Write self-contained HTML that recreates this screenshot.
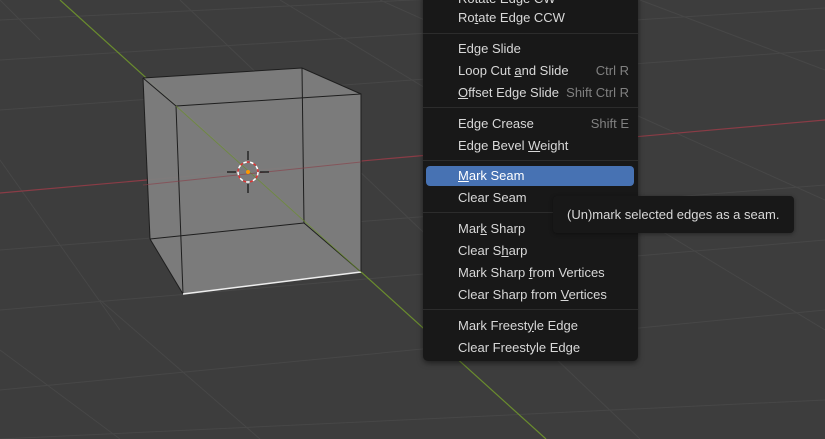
<!DOCTYPE html>
<html><head><meta charset="utf-8"><style>
body{margin:0;width:825px;height:439px;overflow:hidden;background:#3d3d3d;font-family:"Liberation Sans","DejaVu Sans",sans-serif;position:relative}
svg{position:absolute;left:0;top:0}
.menu{position:absolute;left:423px;top:-5px;width:215px;height:366px;background:#181818;border-radius:0 0 5px 5px;box-shadow:0 2px 6px rgba(0,0,0,.5)}
.it{position:absolute;left:35px;color:#d8d8d8;font-size:13px;line-height:20px;height:20px;white-space:nowrap}
.sc{position:absolute;right:9px;color:#808080;font-size:13px;line-height:20px}
.sep{position:absolute;left:0;right:0;height:1px;background:#2c2c2c}
.hl{position:absolute;left:3px;right:4px;height:20px;background:#4772b3;border-radius:4px}
u{text-decoration:underline}
.tip{position:absolute;left:553px;top:196px;width:241px;height:37px;background:#181818;border-radius:4px;color:#d8d8d8;font-size:13px;line-height:37px;text-indent:14px;box-shadow:0 1px 4px rgba(0,0,0,.4)}
</style></head><body>
<svg width="825" height="439">
<g stroke="#474747" stroke-width="1" fill="none">
<line x1="0" y1="60" x2="825" y2="8"/>
<line x1="0" y1="110" x2="825" y2="50"/>
<line x1="0" y1="250" x2="825" y2="185"/>
<line x1="0" y1="310" x2="825" y2="240"/>
<line x1="0" y1="390" x2="825" y2="310"/>
<line x1="0" y1="439" x2="825" y2="400"/>
<line x1="0" y1="20" x2="825" y2="-20"/>
<line x1="0" y1="160" x2="120" y2="330"/>
<line x1="0" y1="0" x2="40" y2="40"/>
<line x1="180" y1="0" x2="640" y2="439"/>
<line x1="280" y1="0" x2="825" y2="330"/>
<line x1="380" y1="0" x2="825" y2="200"/>
<line x1="0" y1="350" x2="120" y2="439"/>
<line x1="640" y1="0" x2="825" y2="70"/>
<line x1="100" y1="300" x2="260" y2="439"/>
</g>
<line x1="0" y1="193" x2="825" y2="120" stroke="#8a3c46" stroke-width="1.2"/>
<line x1="60" y1="0" x2="546" y2="439" stroke="#6a8c2e" stroke-width="1.2"/>
<polygon points="143,78 302,68 361,94 361,272 183,294 150,239" fill="#7e7e7e" fill-opacity="0.95"/>
<g stroke="#1e1e1e" stroke-width="1" fill="none">
<polyline points="143,78 302,68 361,94 361,272"/>
<line x1="143" y1="78" x2="176" y2="106"/>
<line x1="176" y1="106" x2="361" y2="94"/>
<line x1="176" y1="106" x2="183" y2="294"/>
<line x1="143" y1="78" x2="150" y2="239"/>
<line x1="150" y1="239" x2="304" y2="223"/>
<line x1="302" y1="68" x2="304" y2="223"/>
<line x1="304" y1="223" x2="361" y2="272"/>
<line x1="150" y1="239" x2="183" y2="294"/>
</g>
<line x1="183" y1="294" x2="361" y2="272" stroke="#eee" stroke-width="1.5"/>
<line x1="176" y1="106" x2="361" y2="272" stroke="#6a8c2e" stroke-width="1" opacity=".7"/>
<line x1="143" y1="185" x2="361" y2="162" stroke="#8a3c46" stroke-width="1" opacity=".6"/>
<circle cx="248" cy="172" r="10" fill="none" stroke="#fff" stroke-width="1.5" stroke-dasharray="4 3"/>
<circle cx="248" cy="172" r="10" fill="none" stroke="#d33" stroke-width="1.5" stroke-dasharray="3 4" stroke-dashoffset="3.5"/>
<g stroke="#111" stroke-width="1.2"><line x1="248" y1="151" x2="248" y2="160"/><line x1="248" y1="184" x2="248" y2="193"/><line x1="227" y1="172" x2="236" y2="172"/><line x1="260" y1="172" x2="269" y2="172"/></g>
<circle cx="248" cy="172" r="2" fill="#f90"/>
</svg>
<div class="menu">
<div class="it" style="top:-6px">Rotate Edge CW</div>
<div class="it" style="top:13px">Ro<u>t</u>ate Edge CCW</div>
<div class="sep" style="top:38px"></div>
<div class="it" style="top:44px">Edge Slide</div>
<div class="it" style="top:66px">Loop Cut <u>a</u>nd Slide</div><div class="sc" style="top:66px">Ctrl R</div>
<div class="it" style="top:88px"><u>O</u>ffset Edge Slide</div><div class="sc" style="top:88px">Shift Ctrl R</div>
<div class="sep" style="top:112px"></div>
<div class="it" style="top:119px">Edge Crease</div><div class="sc" style="top:119px">Shift E</div>
<div class="it" style="top:141px">Edge Bevel <u>W</u>eight</div>
<div class="sep" style="top:165px"></div>
<div class="hl" style="top:171px"></div>
<div class="it" style="top:171px;color:#fff"><u>M</u>ark Seam</div>
<div class="it" style="top:193px">Clear Seam</div>
<div class="sep" style="top:217px"></div>
<div class="it" style="top:224px">Mar<u>k</u> Sharp</div>
<div class="it" style="top:246px">Clear S<u>h</u>arp</div>
<div class="it" style="top:268px">Mark Sharp <u>f</u>rom Vertices</div>
<div class="it" style="top:290px">Clear Sharp from <u>V</u>ertices</div>
<div class="sep" style="top:314px"></div>
<div class="it" style="top:321px">Mark Freest<u>y</u>le Edge</div>
<div class="it" style="top:343px">Clear Freestyle Edge</div>
</div>
<div class="tip">(Un)mark selected edges as a seam.</div>
</body></html>
